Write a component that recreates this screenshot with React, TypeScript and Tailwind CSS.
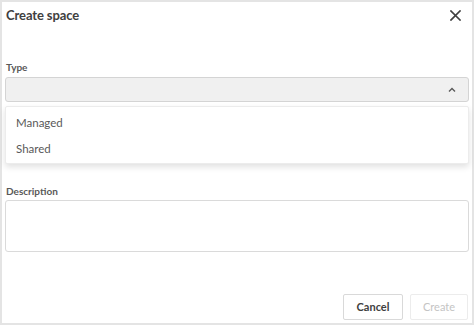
export default function App() {
    return (
        <div className="w-[474px] h-[325px] bg-white border-2 border-[#e4e4e4] flex flex-col text-[#404040]" style={{ fontFamily: "Lato, 'Open Sans', sans-serif" }}>
            <div className="h-[26px] flex items-center justify-between pl-[4px] pr-[11px]">
                <h2 className="text-[13px] font-bold leading-4 tracking-[-0.1px]">Create space</h2>
                <svg width="11" height="11" viewBox="0 0 11 11" className="text-[#404040]">
                    <path d="M1 1 L10 10 M10 1 L1 10" stroke="currentColor" strokeWidth="1.7" strokeLinecap="square" />
                </svg>
            </div>

            <div className="px-[3px]">
                <div className="mt-[32px] pl-[1px] text-[10px] font-bold leading-[14px] text-[#595959]">Type</div>
                <div className="mt-[3px] h-[25px] rounded-[3px] border border-[#d4d4d4] bg-[#f0f0f0] flex items-center justify-end pr-[12px]">
                    <svg width="8" height="6" viewBox="0 0 8 6" className="text-[#595959]">
                        <path d="M1 4.5 L4 1.5 L7 4.5" fill="none" stroke="currentColor" strokeWidth="1.4" />
                    </svg>
                </div>

                <div className="relative h-[82px]">
                    <div className="absolute left-0 right-0 top-[4px] h-[58px] bg-white rounded-[2px] border border-[#ececec] shadow-[0_3px_6px_rgba(0,0,0,0.12)] flex flex-col pt-[3px]">
                        <div className="h-[26px] flex items-center pl-[10px] text-[11.5px] text-[#595959]">Managed</div>
                        <div className="h-[26px] flex items-center pl-[10px] text-[11.5px] text-[#595959]">Shared</div>
                    </div>
                </div>

                <div className="pl-[1px] text-[10px] font-bold leading-[14px] text-[#595959]">Description</div>
                <div className="mt-[2px] h-[52px] rounded-[3px] border border-[#dadada] bg-white" />
            </div>

            <div className="flex-1 flex items-end justify-end gap-[7px] pr-[4px] pb-[3px]">
                <button className="w-[60px] h-[26px] rounded-[2px] border border-[#d9d9d9] bg-white text-[11px] font-bold text-[#404040]">Cancel</button>
                <button className="w-[58px] h-[26px] rounded-[2px] border border-[#ececec] bg-white text-[11px] text-[#c4c4c4]">Create</button>
            </div>
        </div>
    );
}
